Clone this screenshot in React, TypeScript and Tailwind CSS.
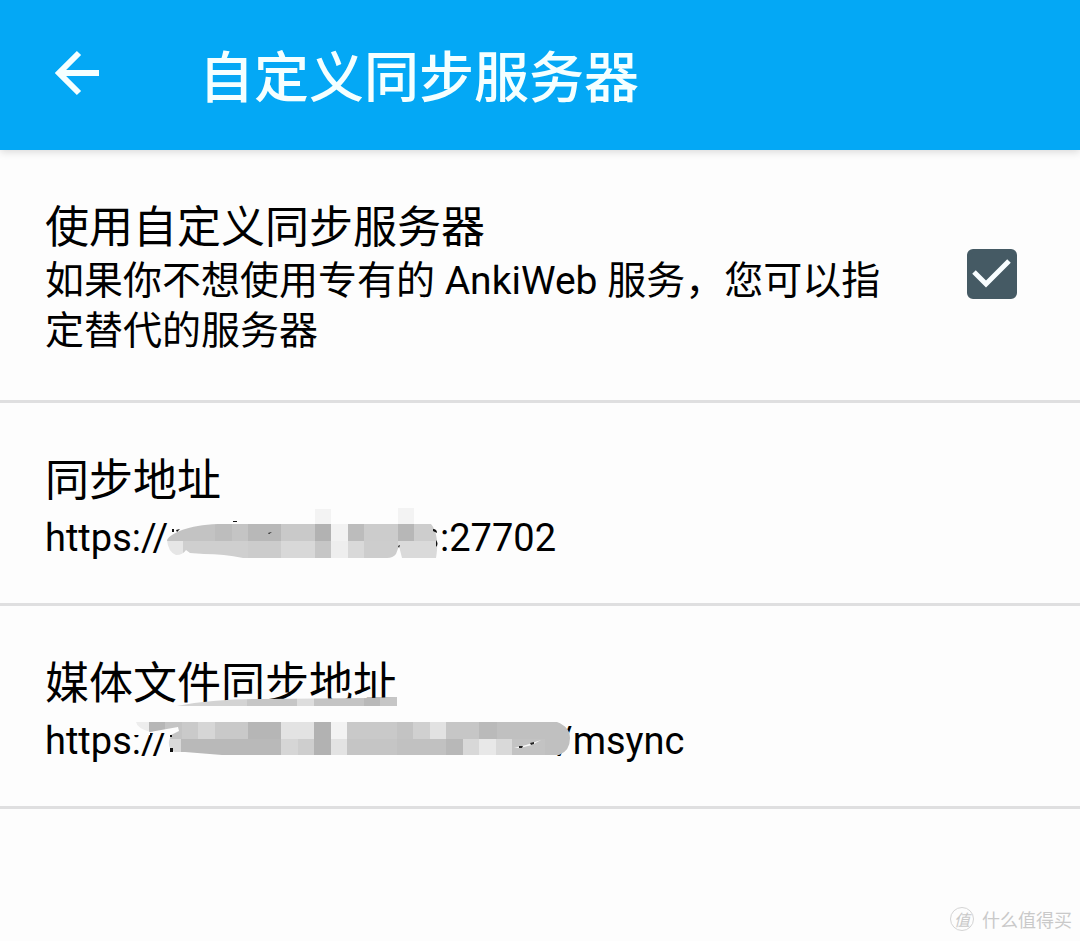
import React, { useState } from 'react';

interface SettingRowProps {
  title: string;
  children: React.ReactNode;
}

interface Block {
  x: number;
  y: number;
  w: number;
  h: number;
  fill: string;
}

const SYNC_BLOCKS: Block[] = [
  { x: 0, y: 19, w: 49, h: 17, fill: '#c3c3c3' },
  { x: 49, y: 19, w: 17, h: 17, fill: '#bdbdbd' },
  { x: 66, y: 19, w: 16, h: 17, fill: '#c4c4c4' },
  { x: 82, y: 19, w: 33, h: 17, fill: '#b8b8b8' },
  { x: 115, y: 19, w: 34, h: 17, fill: '#c9c9c9' },
  { x: 149, y: 19, w: 16, h: 17, fill: '#b2b2b2' },
  { x: 165, y: 19, w: 17, h: 17, fill: '#f2f2f2' },
  { x: 182, y: 19, w: 16, h: 17, fill: '#bcbcbc' },
  { x: 198, y: 19, w: 34, h: 17, fill: '#cccccc' },
  { x: 232, y: 19, w: 16, h: 17, fill: '#b7b7b7' },
  { x: 248, y: 19, w: 27, h: 17, fill: '#cdcdcd' },
  { x: 0, y: 36, w: 17, h: 17, fill: '#e6e6e6' },
  { x: 17, y: 36, w: 65, h: 17, fill: '#cfcfcf' },
  { x: 82, y: 36, w: 33, h: 17, fill: '#cccccc' },
  { x: 115, y: 36, w: 34, h: 17, fill: '#d8d8d8' },
  { x: 149, y: 36, w: 16, h: 17, fill: '#c6c6c6' },
  { x: 165, y: 36, w: 17, h: 17, fill: '#eeeeee' },
  { x: 182, y: 36, w: 16, h: 17, fill: '#d9d9d9' },
  { x: 198, y: 36, w: 34, h: 17, fill: '#cdcdcd' },
  { x: 232, y: 36, w: 43, h: 17, fill: '#dadada' },
];

const MEDIA_BLOCKS: Block[] = [
  { x: 0, y: 37, w: 17, h: 17, fill: '#ededed' },
  { x: 17, y: 37, w: 16, h: 17, fill: '#b6b6b6' },
  { x: 33, y: 37, w: 17, h: 17, fill: '#c4c4c4' },
  { x: 50, y: 37, w: 16, h: 17, fill: '#cacaca' },
  { x: 66, y: 37, w: 17, h: 17, fill: '#d6d6d6' },
  { x: 83, y: 37, w: 33, h: 17, fill: '#c9c9c9' },
  { x: 116, y: 37, w: 33, h: 17, fill: '#b6b6b6' },
  { x: 149, y: 37, w: 33, h: 17, fill: '#e3e3e3' },
  { x: 182, y: 37, w: 17, h: 33, fill: '#b2b2b2' },
  { x: 199, y: 37, w: 16, h: 17, fill: '#f3f3f3' },
  { x: 215, y: 37, w: 50, h: 17, fill: '#c9c9c9' },
  { x: 265, y: 37, w: 16, h: 17, fill: '#c3c3c3' },
  { x: 281, y: 37, w: 17, h: 17, fill: '#d0d0d0' },
  { x: 298, y: 37, w: 16, h: 17, fill: '#e2e2e2' },
  { x: 314, y: 37, w: 33, h: 17, fill: '#c6c6c6' },
  { x: 347, y: 37, w: 18, h: 17, fill: '#bababa' },
  { x: 365, y: 37, w: 77, h: 17, fill: '#c0c0c0' },
  { x: 34, y: 54, w: 15, h: 16, fill: '#d9d9d9' },
  { x: 49, y: 54, w: 100, h: 16, fill: '#b9b9b9' },
  { x: 149, y: 54, w: 17, h: 16, fill: '#d6d6d6' },
  { x: 166, y: 54, w: 16, h: 16, fill: '#cecece' },
  { x: 199, y: 54, w: 16, h: 16, fill: '#e3e3e3' },
  { x: 215, y: 54, w: 50, h: 16, fill: '#c5c5c5' },
  { x: 265, y: 54, w: 49, h: 16, fill: '#c1c1c1' },
  { x: 314, y: 54, w: 17, h: 16, fill: '#b8b8b8' },
  { x: 331, y: 54, w: 16, h: 16, fill: '#d8d8d8' },
  { x: 347, y: 54, w: 17, h: 16, fill: '#e8e8e8' },
  { x: 364, y: 54, w: 16, h: 16, fill: '#d9d9d9' },
  { x: 380, y: 54, w: 33, h: 16, fill: '#c3c3c3' },
  { x: 413, y: 54, w: 29, h: 16, fill: '#c0c0c0' },
  // thin strip brushed under the title
  { x: 40, y: 11, w: 75, h: 10, fill: '#d3d3d3' },
  { x: 115, y: 11, w: 50, h: 10, fill: '#c6c6c6' },
  { x: 165, y: 11, w: 17, h: 10, fill: '#dddddd' },
  { x: 182, y: 11, w: 50, h: 10, fill: '#c4c4c4' },
  { x: 232, y: 11, w: 16, h: 10, fill: '#b9b9b9' },
  { x: 248, y: 11, w: 17, h: 10, fill: '#c6c6c6' },
];

function renderBlocks(blocks: Block[]) {
  return blocks.map((b) => (
    <rect key={`${b.x}-${b.y}`} x={b.x} y={b.y} width={b.w} height={b.h} fill={b.fill} />
  ));
}

const SyncMosaic: React.FC = () => (
  <svg
    className="absolute left-[121px] -top-2 w-[280px] h-[70px]"
    viewBox="0 0 280 70"
    aria-hidden="true"
  >
    <clipPath id="sync-brush">
      <path d="M1 35 C5 28 22 20 52 19 H265 C270 25 273 36 270 53 H236 L233 41 L230 49 Q227 53 221 53 H77 Q58 49 38 49 L24 48 L20 45 Q17 50 10 50 Q2 47 1 35Z" />
    </clipPath>
    <rect x="149" y="4" width="16" height="15" fill="#f3f3f3" />
    <rect x="232" y="3" width="16" height="16" fill="#f3f3f3" />
    <g clipPath="url(#sync-brush)">{renderBlocks(SYNC_BLOCKS)}</g>
    <path d="M6 24h2v3h-2z M10 25l4-1-3 3z M67 16h4v1h-4z M102 28l4-1-3 2z" fill="#111" />
    <path d="M267 24q4 0 4 4l-4-2z M270 35q3 4 0 7z M232 41l2-1-1 3z" fill="#111" />
  </svg>
);

const MediaMosaic: React.FC = () => (
  <svg
    className="absolute left-[87px] -top-[31px] w-[445px] h-[80px]"
    viewBox="0 0 445 80"
    aria-hidden="true"
  >
    <clipPath id="media-brush">
      <path d="M45 21 Q80 14 130 14 L238 13 L265 12 V21Z M4 37 H425 Q438 42 438 53 Q438 66 427 70 H90 L53 67 L43 67 Q36 65 37 56 L39 50 L47 46 L46 42 L18 47 Q5 43 4 37Z" />
    </clipPath>
    <path d="M2 37 L8 47 L46 42 L47 45 L33 48 L18 48 L18 50 H2Z" fill="#fdfdfd" />
    <rect x="44" y="21" width="221" height="3" fill="#fdfdfd" />
    <g clipPath="url(#media-brush)">{renderBlocks(MEDIA_BLOCKS)}</g>
    <path d="M382 63 L394 60 L409 55 L400 60 L388 63Z" fill="#f7f7f7" />
    <path d="M387 61l4 0-1 2-3 0z M398 58l4-1 0 2-3 1z" fill="#222" />
    <path d="M38 50h2v2h-2z M38 63h3v4h-3z" fill="#111" />
  </svg>
);

const SettingRow: React.FC<SettingRowProps> = ({ title, children }) => (
  <section className="border-b-3 border-[#dfdfe0] px-[45px] pt-[42px] pb-10">
    <h2 className="text-[44px] leading-[64px]">{title}</h2>
    {children}
  </section>
);

export default function App() {
  const [useCustom, setUseCustom] = useState(true);

  return (
    <div className="min-h-screen flex flex-col bg-[#fdfdfd] text-black font-['Noto_Sans_CJK_SC',sans-serif]">
      {/* App bar */}
      <header className="flex items-center gap-[98px] h-[150px] pl-[53px] pb-1 bg-[#04a8f5] text-[#f5ffff] shadow-[0_2px_8px_rgba(0,0,0,0.15)]">
        <button type="button" aria-label="返回" className="shrink-0">
          <svg className="w-12 h-12" viewBox="0 0 48 48" fill="none" stroke="currentColor" strokeWidth="6" aria-hidden="true">
            <path d="M46 24H6 M26 4L6 24l20 20" />
          </svg>
        </button>
        <h1 className="text-[55px] leading-[72px] font-medium">自定义同步服务器</h1>
      </header>

      <main>
        {/* Toggle */}
        <section className="flex items-center justify-between border-b-3 border-[#dfdfe0] pl-[45px] pr-[63px] pt-[42px] pb-11">
          <label htmlFor="use-custom" className="max-w-[850px]">
            <span className="block text-[44px] leading-[64px]">使用自定义同步服务器</span>
            <span className="block text-[39px] leading-[50px] font-[Roboto,'Noto_Sans_CJK_SC',sans-serif]">
              如果你不想使用专有的 AnkiWeb 服务，您可以指定替代的服务器
            </span>
          </label>
          <span className="relative shrink-0 w-[50px] h-[50px]">
            <input
              id="use-custom"
              type="checkbox"
              checked={useCustom}
              onChange={(e) => setUseCustom(e.target.checked)}
              className="block w-full h-full appearance-none rounded-md border-4 border-[#455a64] checked:bg-[#455a64]"
            />
            {useCustom && (
              <svg
                className="absolute inset-0 pointer-events-none"
                viewBox="0 0 50 50"
                fill="none"
                stroke="#f8fdff"
                strokeWidth="5"
                aria-hidden="true"
              >
                <path d="M7 23L19 35L42 12" />
              </svg>
            )}
          </span>
        </section>

        <SettingRow title="同步地址">
          <p className="relative flex mt-1 text-[38px] leading-[50px] font-[Roboto,sans-serif]">
            <span className="w-[395px]">https://</span>
            <span>:27702</span>
            <SyncMosaic />
          </p>
        </SettingRow>

        <SettingRow title="媒体文件同步地址">
          <p className="relative flex mt-1 text-[38px] leading-[50px] font-[Roboto,sans-serif]">
            <span className="w-[512px]">https://</span>
            <span>/msync</span>
            <MediaMosaic />
          </p>
        </SettingRow>
      </main>

      {/* Watermark */}
      <footer className="mt-auto flex items-center justify-end gap-2 pr-2 pb-2 text-[#c9c9c9]">
        <span className="flex items-center justify-center w-6 h-6 rounded-full border border-[#d4d4d4] text-base leading-4 italic">值</span>
        <span className="text-lg leading-7">什么值得买</span>
      </footer>
    </div>
  );
}
